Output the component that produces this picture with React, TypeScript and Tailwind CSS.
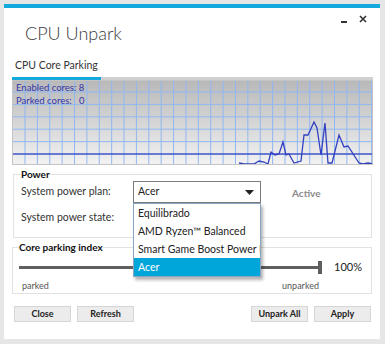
const chartLine: [number, number][] = [
  [226, 82], [231, 83], [241, 83], [246, 80], [251, 81], [255, 83], [258, 71], [262, 74],
  [266, 73], [270, 61], [273, 74], [276, 73], [281, 82], [288, 80], [291, 54], [295, 54],
  [301, 41], [304, 47], [308, 74], [312, 42], [315, 82], [319, 82], [326, 54], [331, 66],
  [335, 65], [346, 82], [350, 83], [355, 82], [361, 83],
];

const plans = ['Equilibrado', 'AMD Ryzen™ Balanced', 'Smart Game Boost Power Plan', 'Acer'];

function CoreChart() {
  const vLines = Array.from({ length: 29 }, (_, k) => 12 + k * 12.38);
  const hLines = [11, 23.4, 35.8, 48.2, 60.6];
  return (
    <div className="relative h-[85px] border border-[#c4c4c4] bg-gradient-to-b from-[#b9b9b9] to-[#f2f2f2]">
      <svg className="absolute inset-0" width="100%" height="100%" viewBox="0 0 359 83" preserveAspectRatio="none">
        {vLines.map((x) => (
          <line key={x} x1={x} y1={0} x2={x} y2={83} stroke="#8fb8f2" strokeWidth={1} />
        ))}
        {hLines.map((y) => (
          <line key={y} x1={0} y1={y} x2={359} y2={y} stroke="#8fb8f2" strokeWidth={1} />
        ))}
        <line x1={0} y1={73} x2={359} y2={73} stroke="#3d55c8" strokeWidth={1.6} />
        <polyline
          points={chartLine.map(([x, y]) => `${x},${y}`).join(' ')}
          fill="none"
          stroke="#3340c0"
          strokeWidth={1.3}
        />
      </svg>
      <div className="relative pl-[3px] text-[9.5px] leading-[13px] text-[#3434a8]">
        <div>Enabled cores: 8</div>
        <div>Parked cores:&nbsp;&nbsp;&nbsp;0</div>
      </div>
    </div>
  );
}

function Button({ label }: { label: string }) {
  return (
    <button className="h-[16px] w-[57px] border border-[#d6d6d6] bg-[#ececec] text-[9px] font-bold leading-none text-[#222]">
      {label}
    </button>
  );
}

export default function App() {
  return (
    <div
      className="h-[344px] w-[385px] bg-[#e6e6e6] pl-[4px] pr-[5px] pt-[4px] pb-[5px]"
      style={{ fontFamily: 'Lato, "Open Sans", sans-serif' }}
    >
      <div className="relative flex h-full flex-col border-t-[4px] border-[#14a9dc] bg-white px-[8px] pr-[7px]">
        <div className="absolute right-[13px] top-[6px] flex items-center gap-[12px] text-[#333]">
          <div className="mt-[7px] h-[2px] w-[6px] bg-[#333]" />
          <svg width="8" height="8" viewBox="0 0 8 8">
            <path d="M1 1L7 7M7 1L1 7" stroke="#333" strokeWidth={1.6} />
          </svg>
        </div>

        <div className="pl-[13px] pt-[12px] text-[18px] font-light leading-[26px] text-[#3a3a3a]">CPU Unpark</div>

        <div className="mt-[12px] pl-[3px] text-[10.5px] leading-[14px] text-[#333]">CPU Core Parking</div>
        <div className="mt-[5px] flex h-[3px]">
          <div className="w-[89px] bg-[#14a9dc]" />
          <div className="flex-1 bg-[#d0d0d0]" />
        </div>

        <CoreChart />

        <fieldset className="mx-[1px] mt-[4px] border border-[#e2e2e2] px-[7px] pb-[11px]">
          <legend className="text-[10px] font-bold leading-[10px] text-[#111]">Power</legend>
          <div className="mt-[2px] flex items-center text-[10.5px] text-[#333]">
            <div className="w-[112px]">System power plan:</div>
            <div className="relative">
              <div className="flex h-[22px] w-[128px] items-center justify-between border border-[#7b7b7b] bg-white pl-[4px] pr-[6px] text-[#222]">
                <span>Acer</span>
                <svg width="9" height="5" viewBox="0 0 9 5">
                  <path d="M0 0H9L4.5 5Z" fill="#222" />
                </svg>
              </div>
              <div className="absolute left-0 top-full z-10 w-[128px] border border-[#8aa6c4] bg-white shadow-[2px_3px_3px_rgba(0,0,0,0.3)]">
                {plans.map((p) => (
                  <div
                    key={p}
                    className={`h-[18px] overflow-hidden whitespace-nowrap pl-[4px] leading-[18px] ${
                      p === 'Acer' ? 'bg-[#00a6da] text-white' : 'text-[#222]'
                    }`}
                  >
                    {p}
                  </div>
                ))}
              </div>
            </div>
            <div className="ml-[31px] mt-[3px] text-[10px] font-bold text-[#8a8a8a]">Active</div>
          </div>
          <div className="mt-[5px] text-[10.5px] leading-[18px] text-[#333]">System power state:</div>
        </fieldset>

        <fieldset className="mt-[4px] mr-[1px] border border-[#e2e2e2] px-[6px] pb-[1px]">
          <legend className="text-[10px] font-bold leading-[10px] text-[#111]">Core parking index</legend>
          <div className="mt-[7px] flex items-center">
            <div className="flex h-[13px] w-[303px] items-center">
              <div className="h-[3px] flex-1 bg-[#5f5f5f]" />
              <div className="h-[13px] w-[4px] bg-[#5f5f5f]" />
            </div>
            <div className="ml-[12px] text-[11px] text-[#222]">100%</div>
          </div>
          <div className="mt-[4px] flex w-[300px] justify-between pl-[3px] text-[9px] leading-[12px] text-[#555]">
            <span>parked</span>
            <span>unparked</span>
          </div>
        </fieldset>

        <div className="mt-[12px] flex px-[2px]">
          <div className="flex gap-[6px]">
            <Button label="Close" />
            <Button label="Refresh" />
          </div>
          <div className="ml-auto flex gap-[6px]">
            <Button label="Unpark All" />
            <Button label="Apply" />
          </div>
        </div>
      </div>
    </div>
  );
}
